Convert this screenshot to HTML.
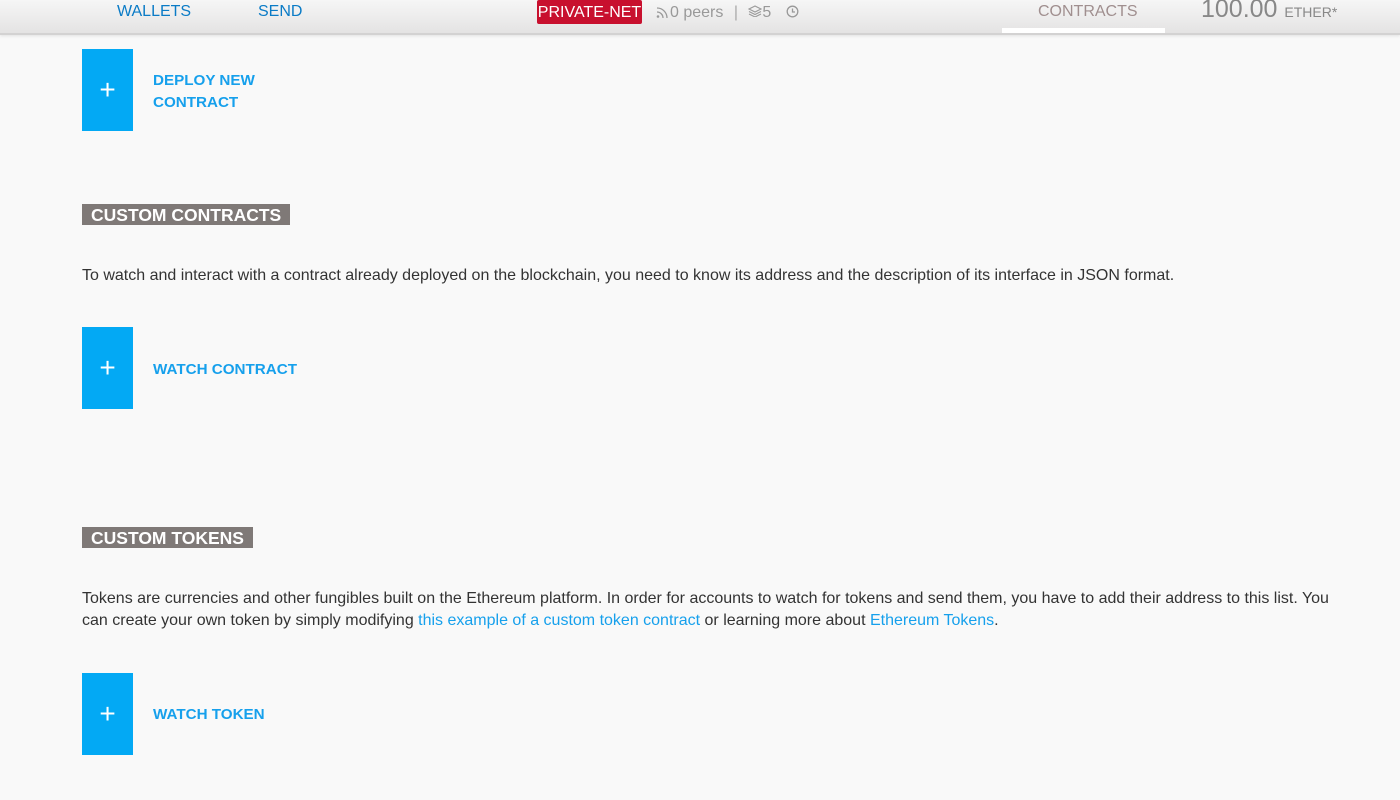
<!DOCTYPE html>
<html><head><style>
body{margin:0;width:1400px;height:800px;background:#f9f9f9;font-family:"Liberation Sans",sans-serif;position:relative;overflow:hidden;color:#333}
.hdr{position:absolute;left:0;top:0;width:1400px;height:33px;background:linear-gradient(#f6f6f6,#e4e3e3);border-bottom:2px solid #d3d2d2;box-shadow:0 1px 3px rgba(0,0,0,.1)}
.a{position:absolute;font-size:16px}
.nav{color:#0a7bc6;top:3px}
.btn{position:absolute;left:82px;width:51px;height:82px;background:#03a9f4;color:#fff;font-size:28px;text-align:center;font-weight:300}
.lbl{position:absolute;left:153px;color:#16a0ec;font-weight:bold;font-size:15.2px;line-height:22px}
.tag{position:absolute;left:82px;height:21px;background:#7f7977;color:#fff;font-weight:bold;font-size:17.5px;line-height:22px;padding:0 9px}
.p{position:absolute;left:82px;font-size:16px;line-height:22px;color:#333;width:1260px}
.p a{color:#16a0ec;text-decoration:none}
</style></head><body>
<div class="hdr">
<div class="a nav" style="left:117px">WALLETS</div>
<div class="a nav" style="left:258px">SEND</div>
<div class="a" style="left:537px;top:0;width:105px;height:24px;background:#c8102e;color:#fff;text-align:center;line-height:25px;border-radius:2px">PRIVATE-NET</div>
<div class="a" style="left:656px;top:4px;color:#999">
<svg width="14" height="12" viewBox="0 0 14 12" style="vertical-align:-1px"><path d="M1 2a10 10 0 0 1 10 10M1 6a6 6 0 0 1 6 6" fill="none" stroke="#999" stroke-width="1.3"/><circle cx="2" cy="10.5" r="1.3" fill="#999"/></svg>0 peers <span style="margin-left:6px;color:#aaa">|</span>
<svg width="14" height="12" viewBox="0 0 14 12" style="margin-left:6px"><path d="M7 1L13 4 7 7 1 4Z M1 6.5L7 9.5 13 6.5 M1 9L7 12 13 9" fill="none" stroke="#999" stroke-width="1.1"/></svg>5
<svg width="13" height="13" viewBox="0 0 13 13" style="margin-left:10px;vertical-align:-1px"><circle cx="6.5" cy="6.5" r="5.3" fill="none" stroke="#999" stroke-width="1.3"/><path d="M6.5 3.5V7H9" fill="none" stroke="#999" stroke-width="1.3"/></svg></div>
<div class="a" style="left:1038px;top:3px;color:#a08f8f">CONTRACTS</div>
<div style="position:absolute;left:1002px;top:28px;width:163px;height:5px;background:#fff"></div>
<div class="a" style="left:1201px;top:-5px;color:#888;font-size:25px;font-weight:300">100.00 <span style="font-size:14px">ETHER*</span></div>
</div>
<div class="btn" style="top:49px;line-height:82px">+</div>
<div class="lbl" style="top:70px">DEPLOY NEW<br>CONTRACT</div>
<div class="tag" style="top:204px">CUSTOM CONTRACTS</div>
<div class="p" style="top:265px">To watch and interact with a contract already deployed on the blockchain, you need to know its address and the description of its interface in JSON format.</div>
<div class="btn" style="top:327px;line-height:82px">+</div>
<div class="lbl" style="top:359px">WATCH CONTRACT</div>
<div class="tag" style="top:527px">CUSTOM TOKENS</div>
<div class="p" style="top:588px">Tokens are currencies and other fungibles built on the Ethereum platform. In order for accounts to watch for tokens and send them, you have to add their address to this list. You can create your own token by simply modifying <a>this example of a custom token contract</a> or learning more about <a>Ethereum Tokens</a>.</div>
<div class="btn" style="top:673px;line-height:82px">+</div>
<div class="lbl" style="top:704px">WATCH TOKEN</div>
</body></html>
